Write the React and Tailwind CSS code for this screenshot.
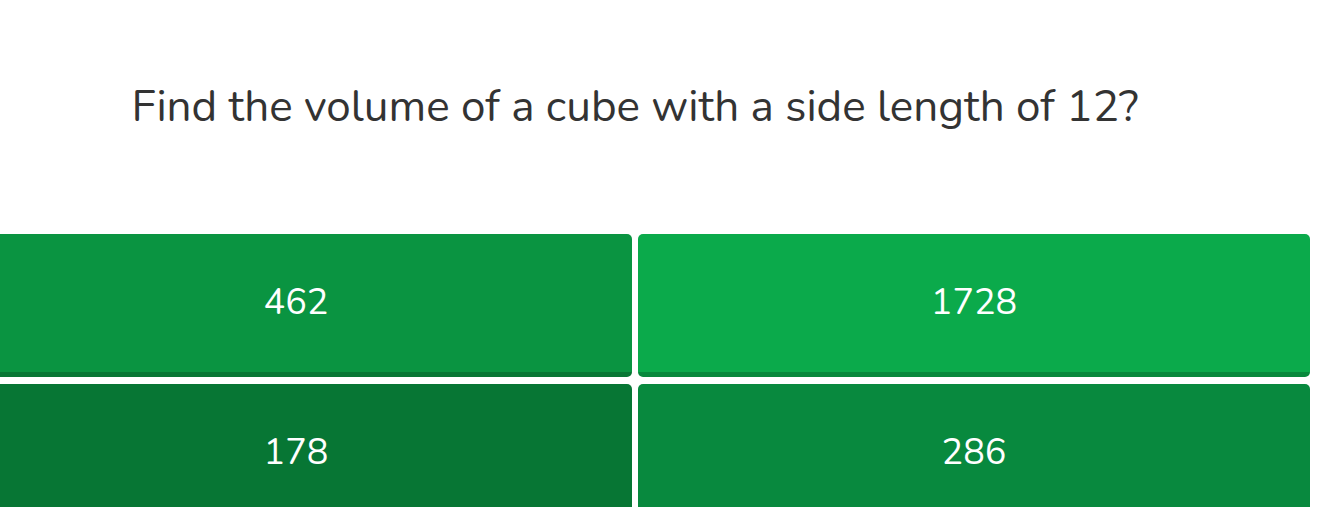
import React from 'react';

const answers = [
    { label: '462', color: 'bg-[#0a9441]' },
    { label: '1728', color: 'bg-[#0baa4b]' },
    { label: '178', color: 'bg-[#077634]' },
    { label: '286', color: 'bg-[#08893e]' },
];

export default function App() {
    return (
        <div className="min-h-screen bg-white overflow-hidden font-['Nunito','Lato',sans-serif]">
            <div className="w-[1350px] ml-[-40px]">
                {/* Pregunta */}
                <div className="h-[234px] pt-[78px] text-center">
                    <h1 className="text-[44px] leading-[58px] text-[#333333]">
                        Find the volume of a cube with a side length of 12?
                    </h1>
                </div>

                {/* Respuestas */}
                <div className="grid grid-cols-2 gap-x-[6px] gap-y-[7px]">
                    {answers.map((a) => (
                        <button
                            key={a.label}
                            className={`${a.color} h-[143px] rounded-[5px] border-b-[5px] border-black/20 text-white text-[36px] flex items-center justify-center`}
                        >
                            {a.label}
                        </button>
                    ))}
                </div>
            </div>
        </div>
    );
}
